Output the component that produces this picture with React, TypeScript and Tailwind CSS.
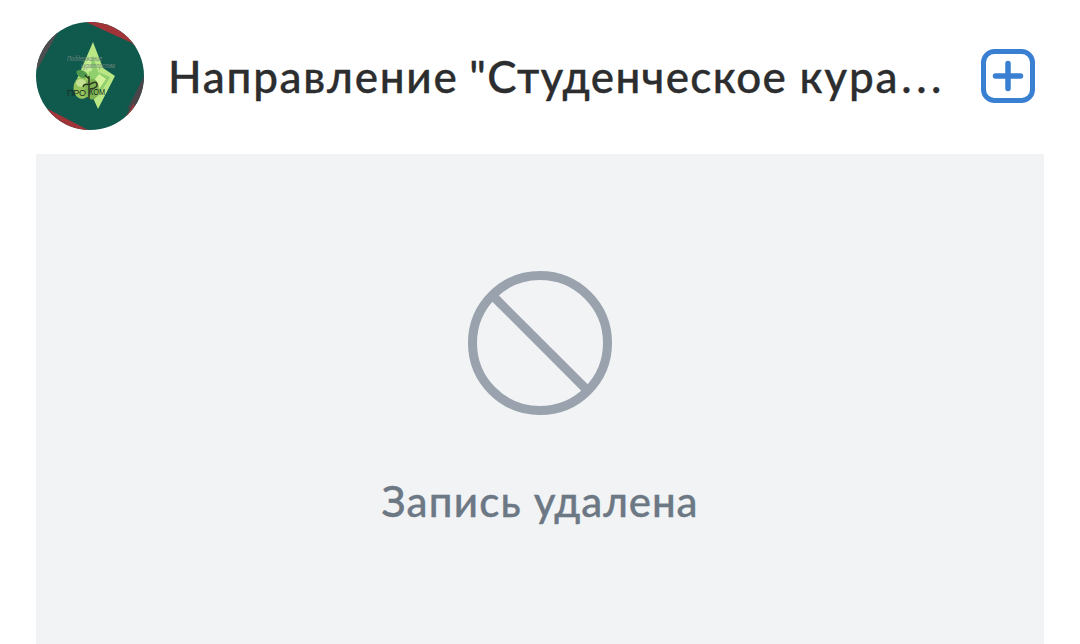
import React from 'react';

const CommunityAvatar: React.FC = () => (
  <svg className="h-[108px] w-[108px] shrink-0" viewBox="0 0 108 108" role="img" aria-label="Аватар">
    <defs>
      <clipPath id="avatar-clip">
        <circle cx="54" cy="54" r="54" />
      </clipPath>
    </defs>
    <g clipPath="url(#avatar-clip)">
      <rect width="108" height="108" fill="#10594d" />
      <path d="M50 0H108V34L96 21L74 11Z" fill="#a03439" />
      <path d="M0 22L22 10L1 48Z" fill="#4f4d50" />
      <path d="M108 54L91 88L108 80Z" fill="#4b4549" />
      <path d="M12 87L52 108H0Z" fill="#a03439" />
      <path d="M98 81L84 104L100 96Z" fill="#963a3d" />
      <path d="M57 20L67 46L79 54L62 87L54 69L38 64Z" fill="#b9e783" />
      <path d="M57 33L62 50L74 55L62 75L51 59Z" fill="#8fcf6d" />
      <path d="M63 52L70 57L63 67L57 60Z" fill="#d4f29a" />
      <path d="M54 32L56 49L47 50Z" fill="#c5ed96" />
      <ellipse cx="46" cy="66" rx="8.5" ry="11" fill="#95c45c" />
      <ellipse cx="56" cy="67" rx="7" ry="10.5" fill="#7fb352" />
      <ellipse cx="46" cy="52" rx="6" ry="3.5" fill="#4f9a4c" transform="rotate(25 46 52)" />
      <ellipse cx="45" cy="61" rx="5" ry="4" fill="#c4e391" />
      <path d="M53 54V77M47 65Q48 61 53 63Q60 58 61 62T54 67M53 57L49 53" fill="none" stroke="#2a3a20" strokeWidth="1.5" />
      <text x="31" y="38.5" fontSize="6.5" textLength="35" lengthAdjust="spacingAndGlyphs" className="font-['Liberation_Sans'] italic" fill="#71877f">Поддержание</text>
      <text x="45" y="45.5" fontSize="6.5" textLength="34" lengthAdjust="spacingAndGlyphs" className="font-['Liberation_Sans'] italic" fill="#71877f">кураторства</text>
      <text x="31" y="74" fontSize="9" textLength="19" className="font-['Liberation_Sans']" fill="#1a2c22">ПРО</text>
      <text x="53" y="73" fontSize="9" textLength="16" lengthAdjust="spacingAndGlyphs" className="font-['Liberation_Sans']" fill="#1a2c22">КОМ</text>
    </g>
  </svg>
);

const SubscribeIcon: React.FC = () => (
  <svg className="h-[54px] w-[54px]" viewBox="0 0 54 54" fill="none" stroke="#3a80d2" aria-hidden="true">
    <rect x="2.5" y="2.5" width="49" height="49" rx="11" strokeWidth="5" />
    <path d="M27 14.5V39.5M14.5 27H39.5" strokeWidth="5.5" strokeLinecap="round" />
  </svg>
);

const BlockedIcon: React.FC = () => (
  <svg className="h-36 w-36" viewBox="0 0 144 144" fill="none" stroke="#99a2ad" strokeWidth="9" aria-hidden="true">
    <circle cx="72" cy="72" r="67.5" />
    <path d="M24.5 24.5L119.5 119.5" />
  </svg>
);

export default function App() {
  return (
    <div className="flex h-screen flex-col overflow-hidden bg-white px-9 font-['Lato',sans-serif]">
      <header className="flex h-[154px] shrink-0 items-center pr-[9px] pb-0.5">
        <CommunityAvatar />
        <h1 className="ml-6 min-w-0 flex-1 pb-px text-[44px] leading-[60px] font-medium whitespace-nowrap text-[#2c2d2e] [-webkit-text-stroke:0.35px_#2c2d2e]">
          <span className="tracking-[1.75px]">Направление </span>
          <span className="-ml-0.5 tracking-[1.3px]">"Студенческое </span>
          <span className="tracking-[1.8px]">кура</span>
          <span className="ml-0.5 tracking-[4.5px]">...</span>
        </h1>
        <button type="button" className="shrink-0" aria-label="Подписаться">
          <SubscribeIcon />
        </button>
      </header>

      <main className="flex flex-1 flex-col items-center bg-[#f1f3f5] pt-[117px]">
        <BlockedIcon />
        <p className="mt-14 text-[42px] leading-[60px] font-medium whitespace-nowrap text-[#6d7885] [-webkit-text-stroke:0.35px_#6d7885]">
          <span className="tracking-[1.2px]">Запись </span>
          <span className="tracking-[0.9px]">удалена</span>
        </p>
      </main>
    </div>
  );
}
